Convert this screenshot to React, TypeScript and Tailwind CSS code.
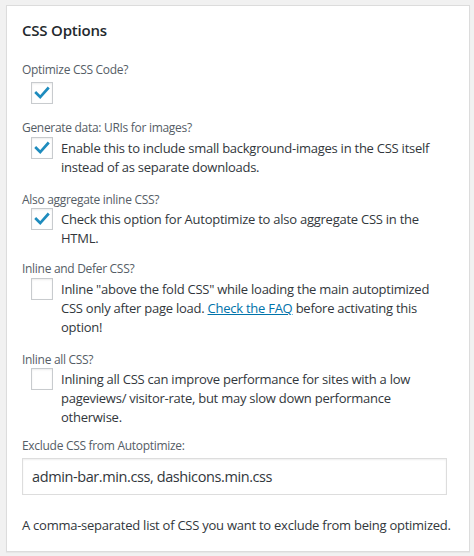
import React from "react";

const font = { fontFamily: '"Open Sans", "Noto Sans", sans-serif' };

function Check({ checked }: { checked: boolean }) {
  return (
    <span className="flex h-[22px] w-[22px] shrink-0 items-center justify-center border border-[#c8cbce] bg-white shadow-[inset_0_1px_2px_rgba(0,0,0,0.08)]">
      {checked && (
        <svg width="18" height="18" viewBox="0 0 20 20">
          <path d="M3.5 10 L8 14.5 L16.5 5" fill="none" stroke="#1e8cbe" strokeWidth="3" strokeLinecap="square" />
        </svg>
      )}
    </span>
  );
}

function Label({ children, mt }: { children: React.ReactNode; mt: string }) {
  return (
    <div className={`${mt} text-[12px] leading-[18px] tracking-[-0.3px] text-[#555d66]`}>{children}</div>
  );
}

function Row({ checked, children, mt }: { checked: boolean; children?: React.ReactNode; mt: string }) {
  return (
    <div className={`${mt} flex items-start gap-[8px] pl-[9px] pr-[12px]`}>
      <Check checked={checked} />
      {children && (
        <div className="pt-[2px] text-[13px] leading-[19px] tracking-[-0.25px] text-[#32373c]">{children}</div>
      )}
    </div>
  );
}

export default function App() {
  return (
    <div className="h-[556px] w-[474px] bg-[#f1f1f1] pl-[6px] pt-[5px]" style={font}>
      <div className="h-[547px] w-[464px] border border-[#dcdcdc] bg-white pl-[15px] pr-[6px] pt-[14px] shadow-[0_1px_1px_rgba(0,0,0,0.04)]">
        <h2 className="text-[15px] font-semibold leading-[20px] tracking-[-0.2px] text-[#23282d]">CSS Options</h2>

        <Label mt="mt-[21px]">Optimize CSS Code?</Label>
        <Row mt="mt-[3px]" checked />

        <Label mt="mt-[15px]">Generate data: URIs for images?</Label>
        <Row mt="mt-0" checked>
          Enable this to include small background-images in the CSS itself instead of as separate downloads.
        </Row>

        <Label mt="mt-[14px]">Also aggregate inline CSS?</Label>
        <Row mt="mt-[-1px]" checked>
          Check this option for Autoptimize to also aggregate CSS in the HTML.
        </Row>

        <Label mt="mt-[12px]">Inline and Defer CSS?</Label>
        <Row mt="mt-0" checked={false}>
          Inline "above the fold CSS" while loading the main autoptimized CSS only after page load.{" "}
          <a className="text-[#0073aa] underline">Check the FAQ</a> before activating this option!
        </Row>

        <Label mt="mt-[14px]">Inline all CSS?</Label>
        <Row mt="mt-[-1px]" checked={false}>
          Inlining all CSS can improve performance for sites with a low pageviews/ visitor-rate, but may slow down
          performance otherwise.
        </Row>

        <Label mt="mt-[10px]">Exclude CSS from Autoptimize:</Label>
        <div className="mt-[3px] flex h-[37px] w-[425px] items-center border border-[#dddddd] bg-white pl-[9px] text-[14.5px] tracking-[-0.4px] text-[#32373c] shadow-[inset_0_1px_2px_rgba(0,0,0,0.07)]">
          admin-bar.min.css, dashicons.min.css
        </div>
        <div className="mt-[21px] whitespace-nowrap text-[13px] leading-[19px] tracking-[-0.25px] text-[#32373c]">
          A comma-separated list of CSS you want to exclude from being optimized.
        </div>
      </div>
    </div>
  );
}
